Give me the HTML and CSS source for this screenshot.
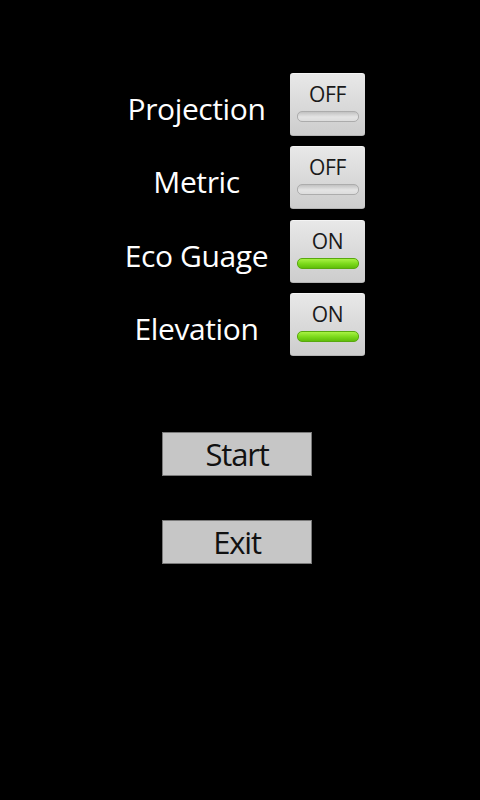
FILE: index.html
```html
<!DOCTYPE html>
<html>
<head>
<meta charset="utf-8">
<link rel="stylesheet" href="styles.css">
</head>
<body>
<div class="screen">
  <div class="settings">
    <div class="row">
      <div class="label">Projection</div>
      <div class="toggle"><span class="state">OFF</span><span class="bar off"></span></div>
    </div>
    <div class="row">
      <div class="label">Metric</div>
      <div class="toggle"><span class="state">OFF</span><span class="bar off"></span></div>
    </div>
    <div class="row">
      <div class="label">Eco Guage</div>
      <div class="toggle"><span class="state">ON</span><span class="bar on"></span></div>
    </div>
    <div class="row">
      <div class="label">Elevation</div>
      <div class="toggle"><span class="state">ON</span><span class="bar on"></span></div>
    </div>
  </div>
  <div class="actions">
    <button class="btn">Start</button>
    <button class="btn">Exit</button>
  </div>
</div>
</body>
</html>
```
FILE: styles.css
```css
html, body {
  margin: 0;
  padding: 0;
  background: #000;
}
body {
  width: 480px;
  height: 800px;
  overflow: hidden;
  font-family: "Open Sans", "DejaVu Sans", sans-serif;
}
.screen {
  display: flex;
  flex-direction: column;
  align-items: center;
  padding-top: 73px;
}
.settings {
  display: flex;
  flex-direction: column;
  gap: 10.3px;
  width: 250px;
}
.row {
  display: flex;
  align-items: center;
  gap: 12px;
}
.label {
  width: 163px;
  text-align: center;
  color: #fff;
  font-size: 30px;
  letter-spacing: -0.4px;
  padding-top: 8px;
}
.toggle {
  width: 75px;
  height: 63px;
  box-sizing: border-box;
  border-radius: 3px;
  background: linear-gradient(#e8e8e8, #dadada 50%, #cdcdcd);
  border-top: 1px solid #f4f4f4;
  border-bottom: 1px solid #b4b4b4;
  display: flex;
  flex-direction: column;
  align-items: center;
}
.state {
  font-size: 21px;
  color: #1a1a1a;
  line-height: 20px;
  letter-spacing: -0.3px;
  margin-top: 10px;
}
.bar {
  width: 62px;
  height: 11px;
  border-radius: 5px;
  margin-top: 7px;
  box-sizing: border-box;
}
.bar.off {
  background: linear-gradient(#c2c2c2, #e4e4e4 55%, #dcdcdc);
  border: 1px solid #acacac;
}
.bar.on {
  background: linear-gradient(#a8f244, #7ad81a 55%, #60be0a);
  border: 1px solid #58a80e;
}
.actions {
  display: flex;
  flex-direction: column;
  gap: 44px;
  margin-top: 76px;
  margin-right: 6px;
}
.btn {
  width: 150px;
  height: 44px;
  margin: 0;
  padding: 0;
  box-sizing: border-box;
  border: 1px solid #7a7a7a;
  background: #c6c6c6;
  color: #111;
  font-family: "Open Sans", "DejaVu Sans", sans-serif;
  font-size: 31px;
  letter-spacing: -1.2px;
  line-height: 40px;
}
```
